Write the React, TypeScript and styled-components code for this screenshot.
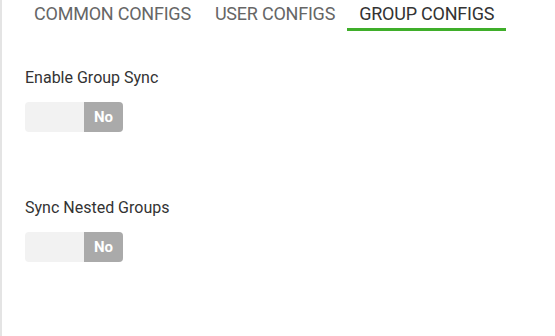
import React, { useState } from "react";
import styled, { createGlobalStyle } from "styled-components";

const Global = createGlobalStyle`
  html, body { margin: 0; padding: 0; background: #fff; }
  body { font-family: Roboto, "Noto Sans", sans-serif; }
`;

const Page = styled.div`
  width: 555px;
  height: 336px;
  box-sizing: border-box;
  border-left: 2px solid #e4e4e4;
  padding-left: 20px;
`;

const Tabs = styled.div`
  display: flex;
`;

const Tab = styled.div<{ $active?: boolean }>`
  padding: 3px 12px 3px;
  font-size: 18px;
  line-height: 22px;
  letter-spacing: -0.22px;
  color: ${(p) => (p.$active ? "#333" : "#666")};
  border-bottom: 3px solid ${(p) => (p.$active ? "#3fae2a" : "transparent")};
  text-transform: uppercase;
  white-space: nowrap;
`;

const Body = styled.div`
  padding-top: 37px;
  display: flex;
  flex-direction: column;
  gap: 66px;
`;

const Field = styled.div`
  display: flex;
  flex-direction: column;
  gap: 15px;
`;

const Label = styled.div`
  font-size: 16px;
  line-height: 19px;
  color: #333;
  margin-left: 3px;
`;

const Toggle = styled.div`
  display: flex;
  width: 98px;
  height: 30px;
  margin-left: 3px;
  border-radius: 4px;
  overflow: hidden;
  background: #f2f2f2;
`;

const Knob = styled.div`
  margin-left: auto;
  width: 39px;
  background: #aaaaaa;
  color: #fff;
  font-weight: 700;
  font-size: 15px;
  display: flex;
  align-items: center;
  justify-content: center;
`;

export default function App() {
  const [active] = useState(2);
  const tabs = ["Common Configs", "User Configs", "Group Configs"];
  return (
    <>
      <Global />
      <Page>
        <Tabs>
          {tabs.map((t, i) => (
            <Tab key={t} $active={i === active}>
              {t}
            </Tab>
          ))}
        </Tabs>
        <Body>
          <Field>
            <Label>Enable Group Sync</Label>
            <Toggle>
              <Knob>No</Knob>
            </Toggle>
          </Field>
          <Field>
            <Label>Sync Nested Groups</Label>
            <Toggle>
              <Knob>No</Knob>
            </Toggle>
          </Field>
        </Body>
      </Page>
    </>
  );
}
